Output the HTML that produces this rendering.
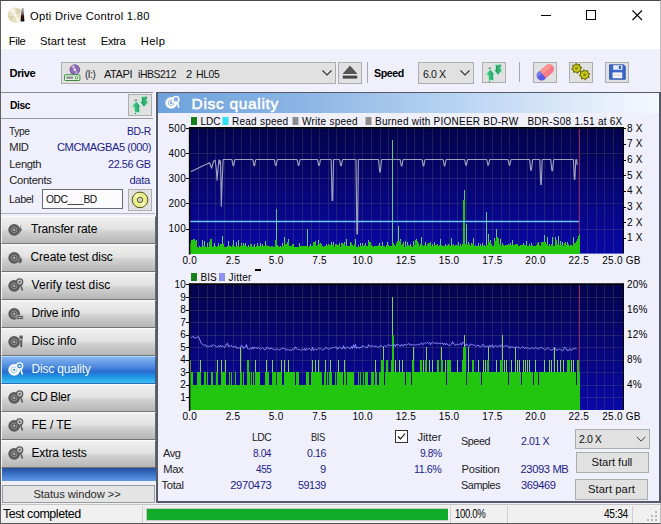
<!DOCTYPE html>
<html><head><meta charset="utf-8"><title>Opti Drive Control 1.80</title><style>
html,body{margin:0;padding:0}
body{width:661px;height:524px;position:relative;overflow:hidden;background:#f0f0fd;font-family:"Liberation Sans",sans-serif;font-size:12px;color:#000;line-height:14px}
div,span{position:absolute;box-sizing:border-box;white-space:nowrap}
svg{position:absolute;overflow:visible}
.b{font-weight:bold}
.nv{color:#1c1c8c}
.btn{background:#e1e1e1;border:1px solid #adadad}
.nav{left:1px;width:155px;height:28px;background:linear-gradient(#f0f0f0 0,#e2e2e2 45%,#d2d2d2 55%,#b6b6b6 100%);border-top:1px solid #fbfbfb;border-left:1px solid #f4f4f4;border-right:1px solid #6a6a70;border-bottom:1px solid #747474}
.nav.sel{background:linear-gradient(#86b6f0 0,#4a86dc 40%,#2a6cd0 56%,#1e96e6 76%,#3cc0f4 100%);border-color:#b4dcff #2c5c9c #2f6cb0 #b4e4ff}
.r{text-align:right}
</style></head><body>
<div style="left:0;top:0;width:661px;height:524px;border:1px solid #6b6b6b;border-top-color:#4a4a4a;border-left:1.6px solid #606060;border-bottom-color:#555;border-right-color:#c0c0c0"></div>
<div style="left:1px;top:1px;width:659px;height:48px;background:#fff"></div>
<svg style="left:0;top:0" width="30" height="30" viewBox="0 0 30 30">
<defs><linearGradient id="ib" x1="0" y1="0" x2="0" y2="1"><stop offset="0" stop-color="#b8b8b8"/><stop offset=".45" stop-color="#6a6066"/><stop offset=".6" stop-color="#2c1016"/><stop offset="1" stop-color="#1a080c"/></linearGradient></defs>
<circle cx="15.2" cy="15" r="7" fill="#e9e2c6" stroke="#cfc7a6" stroke-width=".7"/>
<path d="M15.2 15L9.6 10.4A7.2 7.2 0 0 1 14 7.9Z" fill="#f8f5e8"/>
<path d="M15.2 15L20.6 19.8A7.2 7.2 0 0 1 16.6 22.1Z" fill="#f6f2e2"/>
<path d="M15.2 15L8.2 16.8A7.2 7.2 0 0 0 11 20.9Z" fill="#d9d0ac"/>
<path d="M15.2 15L17 8A7.2 7.2 0 0 1 21.6 11.6Z" fill="#dcd4b4"/>
<circle cx="15.2" cy="15" r="1.5" fill="#fbfaf2"/>
<path d="M21.6 8H23.6L24.4 21.6H20.6Z" fill="url(#ib)"/>
</svg>
<span style="left:30.00px;top:9.00px;font-size:11.2px;letter-spacing:0.254px;">Opti Drive Control 1.80</span>
<svg style="left:0;top:0" width="661" height="30">
<path d="M541 15.5H551" stroke="#000" stroke-width="1"/>
<rect x="586.5" y="10.5" width="9" height="9" fill="none" stroke="#000" stroke-width="1"/>
<path d="M632.5 10.5L642 20M642 10.5L632.5 20" stroke="#000" stroke-width="1.1" fill="none"/>
</svg>
<span style="left:8.75px;top:34.00px;font-size:11.2px;letter-spacing:-0.344px;">File</span>
<span style="left:40.00px;top:34.00px;font-size:11.2px;letter-spacing:0.106px;">Start test</span>
<span style="left:100.75px;top:34.00px;font-size:11.2px;letter-spacing:-0.302px;">Extra</span>
<span style="left:140.75px;top:34.00px;font-size:11.2px;letter-spacing:0.411px;">Help</span>
<span style="left:9.50px;top:66.00px;font-size:11.2px;letter-spacing:-0.450px;font-weight:bold;">Drive</span>
<div class="btn" style="left:61px;top:62px;width:275px;height:22px"></div>
<svg style="left:60px;top:60px" width="24" height="24" viewBox="60 60 24 24">
<circle cx="74.8" cy="69.7" r="4.9" fill="#8f6bb8" stroke="#5e4488" stroke-width=".7"/>
<path d="M74.8 69.7L71.2 66.6A4.8 4.8 0 0 1 74.4 64.9Z" fill="#cdb6e6"/>
<path d="M74.8 69.7L78.4 72.6A4.8 4.8 0 0 1 75.4 74.5Z" fill="#b79ad8"/>
<circle cx="74.8" cy="69.7" r="1.2" fill="#f4eefa"/>
<rect x="64.5" y="74.7" width="15.4" height="5.8" rx="1" fill="#e6efe6" stroke="#3b8a3b" stroke-width="1"/>
<rect x="66.4" y="76.5" width="6.8" height="2.3" fill="#8e8e8e"/>
<circle cx="76.5" cy="77.6" r="1.3" fill="#fff" stroke="#2ca02c" stroke-width=".9"/>
</svg>
<span style="left:84.70px;top:67.00px;font-size:11.2px;letter-spacing:-0.450px;transform:scaleX(0.8771);transform-origin:0 0;color:#222;">(I:)</span>
<span style="left:104.20px;top:67.00px;font-size:11.2px;letter-spacing:-0.450px;transform:scaleX(0.9866);transform-origin:0 0;color:#111;">ATAPI</span>
<span style="left:137.70px;top:67.00px;font-size:11.2px;letter-spacing:-0.450px;transform:scaleX(0.9281);transform-origin:0 0;color:#111;">iHBS212</span>
<span style="left:186.09px;top:67.00px;font-size:11.2px;letter-spacing:0.000px;color:#111;">2</span>
<span style="left:195.50px;top:67.00px;font-size:11.2px;letter-spacing:-0.450px;transform:scaleX(0.9363);transform-origin:0 0;color:#111;">HL05</span>
<svg style="left:321px;top:69px" width="12" height="8"><path d="M1.5 1.5L6 6L10.5 1.5" fill="none" stroke="#333" stroke-width="1.1"/></svg>
<div class="btn" style="left:338px;top:62px;width:24px;height:22px"></div>
<svg style="left:342px;top:63.5px" width="16" height="16"><path d="M8 1.5L15.5 10H0.5Z" fill="#555"/><rect x="0.8" y="11.6" width="14.4" height="3" fill="#444"/></svg>
<div style="left:367px;top:62px;width:1px;height:21px;background:#a8a8a8"></div>
<span style="left:374.00px;top:66.00px;font-size:11.2px;letter-spacing:-0.450px;transform:scaleX(0.9528);transform-origin:0 0;font-weight:bold;">Speed</span>
<div class="btn" style="left:418px;top:62px;width:56px;height:22px"></div>
<span style="left:422.70px;top:67.00px;font-size:11.2px;letter-spacing:-0.450px;transform:scaleX(0.9445);transform-origin:0 0;color:#111;">6.0 X</span>
<svg style="left:459px;top:69px" width="12" height="8"><path d="M1.5 1.5L6 6L10.5 1.5" fill="none" stroke="#333" stroke-width="1.1"/></svg>
<div class="btn" style="left:482px;top:62px;width:24px;height:21px"></div>
<svg style="left:482px;top:62px" width="24" height="21" viewBox="0 0 24 21">
<path d="M8.2 7.4L12.9 12.8H11.2L11.9 18.5H6.9L6 12.8H3.6Z" fill="#3dbb7c" stroke="#a4eecb" stroke-width=".9" stroke-linejoin="round"/>
<path d="M16.1 13L11.9 7.6H13.8L13.2 2.7H18.3L19 7.6H20.6Z" fill="#35b072" stroke="#a4eecb" stroke-width=".9" stroke-linejoin="round"/>
<path d="M8.2 8.6L11 12H9.8L10.4 17.4" stroke="#2a9460" stroke-width="1" fill="none"/>
<path d="M16.1 11.8L13.6 8.6H14.9L14.4 3.8" stroke="#2a9460" stroke-width="1" fill="none"/>
<path d="M6.6 6.2H9M7 19L7.8 20M18 2.6L19 4.6" stroke="#1c5a3a" stroke-width=".9"/>
</svg>
<div style="left:519px;top:62px;width:1px;height:20px;background:#a8a8a8"></div>
<div class="btn" style="left:533px;top:62px;width:24px;height:21px"></div>
<svg style="left:533px;top:62px" width="24" height="21" viewBox="0 0 24 21">
<g transform="rotate(-41 12.4 10.3)"><rect x="2.6" y="5.5" width="19.6" height="9.6" rx="4.4" fill="#f47c88"/>
<rect x="8" y="6" width="13" height="4" rx="2" fill="#fa9a90" opacity=".8"/>
<path d="M7 5.5H9V15.1H7A4.4 4.4 0 0 1 2.6 10.7V9.9A4.4 4.4 0 0 1 7 5.5Z" fill="#5a5ae8"/>
<path d="M7 5.5H9V9H3A4.4 4.4 0 0 1 7 5.5Z" fill="#7c7cf8"/></g>
</svg>
<div class="btn" style="left:569px;top:62px;width:24px;height:21px"></div>
<svg style="left:569px;top:62px" width="24" height="21" viewBox="0 0 24 21">
<g stroke="#6e6e0e" stroke-width="1.1" fill="#cccb18">
<path d="M7.2 1.6L8.6 3.1L10.5 2.4L10.8 4.6L12.6 5.6L11.3 7.2L11.9 9.2L9.8 9.4L8.6 11.1L6.9 9.8L4.8 10.3L4.6 8.2L2.8 7L4.2 5.4L3.7 3.3L5.8 3.2Z"/>
<path d="M15 7.8L16.6 9.2L18.6 8.6L18.8 10.8L20.7 11.9L19.3 13.5L19.9 15.6L17.7 15.8L16.5 17.6L14.7 16.3L12.6 16.8L12.4 14.6L10.5 13.5L11.9 11.8L11.4 9.8L13.6 9.6Z"/>
</g>
<circle cx="7.4" cy="6.3" r="1.4" fill="#85840f"/><circle cx="15.6" cy="12.8" r="1.5" fill="#85840f"/>
</svg>
<div class="btn" style="left:605px;top:62px;width:24px;height:21px"></div>
<svg style="left:605px;top:62px" width="24" height="21" viewBox="0 0 24 21">
<path d="M4.5 2.8H18.6L20.3 4.5V17.3H4.5Z" fill="#3a66cc" stroke="#2c4ea6" stroke-width=".8"/>
<rect x="8.2" y="3.2" width="9.2" height="4.6" fill="#e4ecfb"/><rect x="13.8" y="3.8" width="2.2" height="3.2" fill="#3a66cc"/>
<rect x="7.6" y="10.4" width="9.6" height="5.8" fill="#f4f4f4"/><rect x="7.6" y="12.8" width="9.6" height=".8" fill="#c8c8d8"/>
</svg>
<div style="left:1px;top:118px;width:152px;height:1px;background:#9a9a9a"></div>
<div style="left:1px;top:92px;width:152px;height:1px;background:#8c8c8c"></div>
<span style="left:9.50px;top:98.00px;font-size:11.2px;letter-spacing:-0.450px;transform:scaleX(0.9200);transform-origin:0 0;font-weight:bold;">Disc</span>
<div class="btn" style="left:128px;top:94px;width:24px;height:22px"></div>
<svg style="left:128px;top:94px" width="24" height="21" viewBox="0 0 24 21">
<path d="M8.2 7.4L12.9 12.8H11.2L11.9 18.5H6.9L6 12.8H3.6Z" fill="#3dbb7c" stroke="#a4eecb" stroke-width=".9" stroke-linejoin="round"/>
<path d="M16.1 13L11.9 7.6H13.8L13.2 2.7H18.3L19 7.6H20.6Z" fill="#35b072" stroke="#a4eecb" stroke-width=".9" stroke-linejoin="round"/>
<path d="M8.2 8.6L11 12H9.8L10.4 17.4" stroke="#2a9460" stroke-width="1" fill="none"/>
<path d="M16.1 11.8L13.6 8.6H14.9L14.4 3.8" stroke="#2a9460" stroke-width="1" fill="none"/>
<path d="M6.6 6.2H9M7 19L7.8 20M18 2.6L19 4.6" stroke="#1c5a3a" stroke-width=".9"/>
</svg>
<span style="left:9.20px;top:124.00px;font-size:11.2px;letter-spacing:-0.450px;transform:scaleX(0.9192);transform-origin:0 0;color:#222;">Type</span>
<span style="left:126.60px;top:124.00px;font-size:11.2px;letter-spacing:-0.450px;transform:scaleX(0.9296);transform-origin:0 0;color:#1c1c8c;">BD-R</span>
<span style="left:9.20px;top:140.00px;font-size:11.2px;letter-spacing:-0.376px;color:#222;">MID</span>
<span style="left:57.40px;top:140.00px;font-size:11.2px;letter-spacing:-0.450px;transform:scaleX(0.9940);transform-origin:0 0;color:#1c1c8c;">CMCMAGBA5 (000)</span>
<span style="left:9.20px;top:157.00px;font-size:11.2px;letter-spacing:-0.374px;color:#222;">Length</span>
<span style="left:108.20px;top:157.00px;font-size:11.2px;letter-spacing:-0.450px;transform:scaleX(0.9758);transform-origin:0 0;color:#1c1c8c;">22.56 GB</span>
<span style="left:9.20px;top:173.00px;font-size:11.2px;letter-spacing:-0.294px;color:#222;">Contents</span>
<span style="left:129.50px;top:173.00px;font-size:11.2px;letter-spacing:-0.347px;color:#1c1c8c;">data</span>
<span style="left:9.20px;top:192.00px;font-size:11.2px;letter-spacing:-0.450px;transform:scaleX(0.9654);transform-origin:0 0;color:#222;">Label</span>
<div style="left:1px;top:213px;width:154px;height:1px;background:#b4b4bc"></div>
<div style="left:154.5px;top:93px;width:1px;height:121px;background:#f8f8ff"></div>
<div style="left:42px;top:189px;width:81px;height:20px;background:#fcfcff;border:1px solid #6a6a6a"></div>
<span style="left:46.00px;top:192.00px;font-size:11.2px;letter-spacing:-0.450px;transform:scaleX(0.9163);transform-origin:0 0;color:#111;">ODC___BD</span>
<div class="btn" style="left:128px;top:189px;width:24px;height:21.5px"></div>
<svg style="left:128px;top:189px" width="24" height="22" viewBox="128 189 24 22">
<circle cx="140" cy="199.9" r="7.8" fill="#e9ee8c" stroke="#50501e" stroke-width="1"/>
<path d="M140 199.9L134.6 195.4A7 7 0 0 1 138.6 193Z M140 199.9L145.6 204.2A7 7 0 0 1 141.6 206.8Z" fill="#f6f9b8"/>
<circle cx="140" cy="199.9" r="2.7" fill="#d2d2c0" stroke="#50501e" stroke-width=".9"/>
</svg>
<div class="nav" style="top:215.5px"><svg style="left:.3px;top:-.5px" width="30" height="28" viewBox="0 0 30 28">
<circle cx="12.2" cy="13.8" r="5.9" fill="#5c5c5c"/>
<circle cx="12.2" cy="13.8" r="2.9" fill="none" stroke="#c4c4c4" stroke-width=".8" opacity=".6"/>
<circle cx="12.2" cy="13.8" r="1.15" fill="#c4c4c4"/>
<path d="M19.6 8.5L16.4 14.2H18.4L16.6 19L20.4 12.8H18.4Z" fill="#5c5c5c"/>
</svg></div>
<span style="left:31.00px;top:222.00px;font-size:12px;letter-spacing:-0.160px;color:#000;">Transfer rate</span>
<div class="nav" style="top:243.5px"><svg style="left:.3px;top:-.5px" width="30" height="28" viewBox="0 0 30 28">
<circle cx="12.2" cy="13.8" r="5.9" fill="#5c5c5c"/>
<circle cx="12.2" cy="13.8" r="2.9" fill="none" stroke="#c4c4c4" stroke-width=".8" opacity=".6"/>
<circle cx="12.2" cy="13.8" r="1.15" fill="#c4c4c4"/>
<path d="M18.2 12.5C20.4 14.5 20.6 17 19.6 18.4C18.6 19.6 16.6 19.6 15.8 18.2C15 16.6 17.6 15 18.2 12.5Z" fill="#5c5c5c" stroke="#c4c4c4" stroke-width=".6"/>
</svg></div>
<span style="left:30.50px;top:250.00px;font-size:12px;letter-spacing:-0.069px;color:#000;">Create test disc</span>
<div class="nav" style="top:271.5px"><svg style="left:.3px;top:-.5px" width="30" height="28" viewBox="0 0 30 28">
<circle cx="12.2" cy="13.8" r="5.9" fill="#5c5c5c"/>
<circle cx="12.2" cy="13.8" r="2.9" fill="none" stroke="#c4c4c4" stroke-width=".8" opacity=".6"/>
<circle cx="12.2" cy="13.8" r="1.15" fill="#c4c4c4"/>
<circle cx="17.6" cy="10" r="3.1" fill="#c4c4c4" stroke="#5c5c5c" stroke-width="1.3"/><circle cx="17.6" cy="10" r="1.1" fill="#5c5c5c"/><path d="M18.8 13L20.4 18.6" stroke="#5c5c5c" stroke-width="1.6"/>
</svg></div>
<span style="left:31.50px;top:278.00px;font-size:12px;letter-spacing:0.091px;color:#000;">Verify test disc</span>
<div class="nav" style="top:299.5px"><svg style="left:.3px;top:-.5px" width="30" height="28" viewBox="0 0 30 28">
<circle cx="12.2" cy="13.8" r="5.9" fill="#5c5c5c"/>
<circle cx="12.2" cy="13.8" r="2.9" fill="none" stroke="#c4c4c4" stroke-width=".8" opacity=".6"/>
<circle cx="12.2" cy="13.8" r="1.15" fill="#c4c4c4"/>
<rect x="14.2" y="15.6" width="7" height="4" rx=".6" fill="#5c5c5c" stroke="#c4c4c4" stroke-width=".8"/><path d="M15.6 17.6H19.8" stroke="#c4c4c4" stroke-width=".8"/>
</svg></div>
<span style="left:31.50px;top:306.00px;font-size:12px;letter-spacing:-0.256px;color:#000;">Drive info</span>
<div class="nav" style="top:327.5px"><svg style="left:.3px;top:-.5px" width="30" height="28" viewBox="0 0 30 28">
<circle cx="12.2" cy="13.8" r="5.9" fill="#5c5c5c"/>
<circle cx="12.2" cy="13.8" r="2.9" fill="none" stroke="#c4c4c4" stroke-width=".8" opacity=".6"/>
<circle cx="12.2" cy="13.8" r="1.15" fill="#c4c4c4"/>
<rect x="17.4" y="7.6" width="3.4" height="3.2" fill="#5c5c5c"/><rect x="18" y="11.4" width="2.4" height="7.8" fill="#5c5c5c" stroke="#c4c4c4" stroke-width=".5"/>
</svg></div>
<span style="left:31.50px;top:334.00px;font-size:12px;letter-spacing:-0.140px;color:#000;">Disc info</span>
<div class="nav sel" style="top:355.5px"><svg style="left:.3px;top:-.5px" width="30" height="28" viewBox="0 0 30 28">
<circle cx="12.2" cy="13.8" r="5.9" fill="#fff"/>
<circle cx="12.2" cy="13.8" r="2.9" fill="none" stroke="#3a8ae0" stroke-width=".8" opacity=".6"/>
<circle cx="12.2" cy="13.8" r="1.15" fill="#3a8ae0"/>
<circle cx="17.6" cy="10" r="3.1" fill="#3a8ae0" stroke="#fff" stroke-width="1.3"/><circle cx="17.6" cy="10" r="1.1" fill="#fff"/><path d="M18.8 13L20.4 18.6" stroke="#fff" stroke-width="1.6"/>
</svg></div>
<span style="left:31.50px;top:362.00px;font-size:12px;letter-spacing:-0.189px;color:#f0fbff;">Disc quality</span>
<div class="nav" style="top:383.5px"><svg style="left:.3px;top:-.5px" width="30" height="28" viewBox="0 0 30 28">
<circle cx="12.2" cy="13.8" r="5.9" fill="#5c5c5c"/>
<circle cx="12.2" cy="13.8" r="2.9" fill="none" stroke="#c4c4c4" stroke-width=".8" opacity=".6"/>
<circle cx="12.2" cy="13.8" r="1.15" fill="#c4c4c4"/>
<circle cx="17.6" cy="10" r="3.1" fill="#c4c4c4" stroke="#5c5c5c" stroke-width="1.3"/><circle cx="17.6" cy="10" r="1.1" fill="#5c5c5c"/><path d="M18.8 13L20.4 18.6" stroke="#5c5c5c" stroke-width="1.6"/>
</svg></div>
<span style="left:30.60px;top:390.00px;font-size:12px;letter-spacing:-0.317px;color:#000;">CD Bler</span>
<div class="nav" style="top:411.5px"><svg style="left:.3px;top:-.5px" width="30" height="28" viewBox="0 0 30 28">
<circle cx="12.2" cy="13.8" r="5.9" fill="#5c5c5c"/>
<circle cx="12.2" cy="13.8" r="2.9" fill="none" stroke="#c4c4c4" stroke-width=".8" opacity=".6"/>
<circle cx="12.2" cy="13.8" r="1.15" fill="#c4c4c4"/>
<circle cx="17.6" cy="10" r="3.1" fill="#c4c4c4" stroke="#5c5c5c" stroke-width="1.3"/><circle cx="17.6" cy="10" r="1.1" fill="#5c5c5c"/><path d="M18.8 13L20.4 18.6" stroke="#5c5c5c" stroke-width="1.6"/>
</svg></div>
<span style="left:31.40px;top:418.00px;font-size:12px;letter-spacing:-0.040px;color:#000;">FE / TE</span>
<div class="nav" style="top:439.5px"><svg style="left:.3px;top:-.5px" width="30" height="28" viewBox="0 0 30 28">
<circle cx="12.2" cy="13.8" r="5.9" fill="#5c5c5c"/>
<circle cx="12.2" cy="13.8" r="2.9" fill="none" stroke="#c4c4c4" stroke-width=".8" opacity=".6"/>
<circle cx="12.2" cy="13.8" r="1.15" fill="#c4c4c4"/>
<circle cx="17.6" cy="10" r="3.1" fill="#c4c4c4" stroke="#5c5c5c" stroke-width="1.3"/><circle cx="17.6" cy="10" r="1.1" fill="#5c5c5c"/><path d="M18.8 13L20.4 18.6" stroke="#5c5c5c" stroke-width="1.6"/>
</svg></div>
<span style="left:31.50px;top:446.00px;font-size:12px;letter-spacing:-0.150px;color:#000;">Extra tests</span>
<div style="left:2px;top:468px;width:154px;height:13px;background:linear-gradient(#244e9e,#3f78cc 55%,#5e98e2)"></div>
<div class="btn" style="left:2px;top:484.5px;width:153px;height:18px;border-color:#9a9a9a;background:#e4e4e4"></div>
<span style="left:33.40px;top:487.00px;font-size:11.2px;letter-spacing:-0.055px;color:#2a2a2a;">Status window &gt;&gt;</span>
<div style="left:1px;top:504px;width:659px;height:19px;background:#f0f0f0;border-top:1px solid #c4c4c4"></div>
<span style="left:3.00px;top:507.00px;font-size:12.5px;letter-spacing:-0.450px;transform:scaleX(0.9986);transform-origin:0 0;">Test completed</span>
<div style="left:146px;top:508px;width:302px;height:13px;background:#e6e6e6;border:1px solid #c8c8c8"></div>
<div style="left:147px;top:509px;width:300.5px;height:11px;background:#10ac2a"></div>
<span style="left:455.30px;top:507.00px;font-size:12.5px;letter-spacing:-0.450px;transform:scaleX(0.7651);transform-origin:0 0;">100.0%</span>
<span style="left:604.20px;top:507.00px;font-size:12.5px;letter-spacing:-0.450px;transform:scaleX(0.8200);transform-origin:0 0;">45:34</span>
<div style="left:142px;top:506px;width:1px;height:17px;background:#d0d0d0"></div>
<div style="left:450px;top:506px;width:1px;height:17px;background:#d0d0d0"></div>
<div style="left:507px;top:506px;width:1px;height:17px;background:#d0d0d0"></div>
<div style="left:632px;top:506px;width:1px;height:17px;background:#d0d0d0"></div>
<svg style="left:646px;top:510px" width="13" height="13"><g fill="#b8b8b8"><rect x="9" y="1" width="2" height="2"/><rect x="5" y="5" width="2" height="2"/><rect x="9" y="5" width="2" height="2"/><rect x="1" y="9" width="2" height="2"/><rect x="5" y="9" width="2" height="2"/><rect x="9" y="9" width="2" height="2"/></g></svg>
<div style="left:156px;top:92px;width:505px;height:411px;background:#f0f0fd;border:2px solid #565a68;border-top-width:1px"></div>
<div style="left:158px;top:93px;width:501px;height:20px;background:linear-gradient(90deg,#6ea2dc 0,#8ab4e4 28%,#bcd6f3 62%,#f6f9ff 100%)"></div>
<svg style="left:160px;top:93px" width="24" height="20" viewBox="0 0 24 20">
<circle cx="11.2" cy="9.8" r="5.9" fill="#fff"/>
<circle cx="11.2" cy="9.8" r="2.8" fill="none" stroke="#7aa8dc" stroke-width=".8"/>
<circle cx="11.2" cy="9.8" r="1.2" fill="#6c9cd4"/>
<circle cx="16" cy="6.4" r="3" fill="#8ab4e6" stroke="#fff" stroke-width="1.4"/>
<path d="M17.4 9L18.8 14.8" stroke="#fff" stroke-width="1.7"/>
</svg>
<span style="left:191.60px;top:96.50px;font-size:15.5px;letter-spacing:0.674px;color:#fff;-webkit-text-stroke:.55px #fff;">Disc quality</span>
<svg style="left:0;top:0" width="661" height="524" font-family="Liberation Sans, sans-serif" font-size="10" letter-spacing=".25">
<defs><linearGradient id="bg" x1="0" y1="0" x2="0" y2="1"><stop offset="0" stop-color="#03034c"/><stop offset="1" stop-color="#0808a6"/></linearGradient></defs>
<rect x="190.0" y="128.2" width="433.0" height="125.4" fill="url(#bg)"/>
<path d="M198.5 128.2V253.6M207.5 128.2V253.6M215.5 128.2V253.6M224.5 128.2V253.6M233.5 128.2V253.6M241.5 128.2V253.6M250.5 128.2V253.6M259.5 128.2V253.6M267.5 128.2V253.6M276.5 128.2V253.6M285.5 128.2V253.6M293.5 128.2V253.6M302.5 128.2V253.6M311.5 128.2V253.6M319.5 128.2V253.6M328.5 128.2V253.6M336.5 128.2V253.6M345.5 128.2V253.6M354.5 128.2V253.6M362.5 128.2V253.6M371.5 128.2V253.6M380.5 128.2V253.6M388.5 128.2V253.6M397.5 128.2V253.6M406.5 128.2V253.6M414.5 128.2V253.6M423.5 128.2V253.6M432.5 128.2V253.6M440.5 128.2V253.6M449.5 128.2V253.6M457.5 128.2V253.6M466.5 128.2V253.6M475.5 128.2V253.6M483.5 128.2V253.6M492.5 128.2V253.6M501.5 128.2V253.6M509.5 128.2V253.6M518.5 128.2V253.6M527.5 128.2V253.6M535.5 128.2V253.6M544.5 128.2V253.6M553.5 128.2V253.6M561.5 128.2V253.6M570.5 128.2V253.6M579.5 128.2V253.6M587.5 128.2V253.6M596.5 128.2V253.6M604.5 128.2V253.6M613.5 128.2V253.6M190.0 153.5H623.0M190.0 178.5H623.0M190.0 203.5H623.0M190.0 229.5H623.0" stroke="#9a8e66" stroke-width="1" fill="none" opacity=".2"/>
<path d="M579.4 128.2V253.6" stroke="#8c2c68" stroke-width="1.2"/>
<path d="M190 253.6V242.7h1V253.6ZM191 253.6V239.7h1V253.6ZM192 253.6V239.7h1V253.6ZM193 253.6V239.2h1V253.6ZM194 253.6V239.2h1V253.6ZM195 253.6V240.6h1V253.6ZM196 253.6V240.6h1V253.6ZM197 253.6V246.9h1V253.6ZM198 253.6V247.5h1V253.6ZM199 253.6V247.0h1V253.6ZM200 253.6V247.0h1V253.6ZM201 253.6V247.2h1V253.6ZM202 253.6V245.7h1V253.6ZM203 253.6V245.7h1V253.6ZM204 253.6V245.7h1V253.6ZM205 253.6V246.5h1V253.6ZM206 253.6V247.0h1V253.6ZM207 253.6V246.6h1V253.6ZM208 253.6V246.6h1V253.6ZM209 253.6V242.0h1V253.6ZM210 253.6V239.2h1V253.6ZM211 253.6V239.2h1V253.6ZM212 253.6V247.4h1V253.6ZM213 253.6V246.1h1V253.6ZM214 253.6V246.1h1V253.6ZM215 253.6V246.4h1V253.6ZM216 253.6V246.7h1V253.6ZM217 253.6V245.8h1V253.6ZM218 253.6V245.8h1V253.6ZM219 253.6V246.3h1V253.6ZM220 253.6V243.8h1V253.6ZM221 253.6V243.8h1V253.6ZM222 253.6V243.8h1V253.6ZM223 253.6V244.3h1V253.6ZM224 253.6V246.8h1V253.6ZM225 253.6V247.3h1V253.6ZM226 253.6V246.5h1V253.6ZM227 253.6V246.0h1V253.6ZM228 253.6V245.9h1V253.6ZM229 253.6V245.9h1V253.6ZM230 253.6V245.9h1V253.6ZM231 253.6V247.0h1V253.6ZM232 253.6V245.4h1V253.6ZM233 253.6V245.4h1V253.6ZM234 253.6V245.7h1V253.6ZM235 253.6V246.5h1V253.6ZM236 253.6V246.0h1V253.6ZM237 253.6V246.0h1V253.6ZM238 253.6V246.0h1V253.6ZM239 253.6V247.2h1V253.6ZM240 253.6V245.6h1V253.6ZM241 253.6V245.6h1V253.6ZM242 253.6V246.0h1V253.6ZM243 253.6V244.5h1V253.6ZM244 253.6V244.5h1V253.6ZM245 253.6V244.5h1V253.6ZM246 253.6V245.9h1V253.6ZM247 253.6V246.5h1V253.6ZM248 253.6V246.5h1V253.6ZM249 253.6V246.9h1V253.6ZM250 253.6V243.6h1V253.6ZM251 253.6V243.6h1V253.6ZM252 253.6V247.3h1V253.6ZM253 253.6V245.6h1V253.6ZM254 253.6V245.6h1V253.6ZM255 253.6V247.0h1V253.6ZM256 253.6V246.4h1V253.6ZM257 253.6V245.6h1V253.6ZM258 253.6V245.6h1V253.6ZM259 253.6V245.9h1V253.6ZM260 253.6V245.6h1V253.6ZM261 253.6V245.6h1V253.6ZM262 253.6V245.6h1V253.6ZM263 253.6V245.6h1V253.6ZM264 253.6V245.6h1V253.6ZM265 253.6V245.2h1V253.6ZM266 253.6V245.2h1V253.6ZM267 253.6V246.2h1V253.6ZM268 253.6V246.1h1V253.6ZM269 253.6V246.1h1V253.6ZM270 253.6V247.1h1V253.6ZM271 253.6V245.9h1V253.6ZM272 253.6V245.9h1V253.6ZM273 253.6V246.9h1V253.6ZM274 253.6V246.7h1V253.6ZM275 253.6V239.6h1V253.6ZM276 253.6V239.6h1V253.6ZM277 253.6V245.4h1V253.6ZM278 253.6V245.6h1V253.6ZM279 253.6V247.0h1V253.6ZM280 253.6V246.6h1V253.6ZM281 253.6V246.6h1V253.6ZM282 253.6V246.1h1V253.6ZM283 253.6V246.1h1V253.6ZM284 253.6V243.9h1V253.6ZM285 253.6V243.9h1V253.6ZM286 253.6V243.8h1V253.6ZM287 253.6V242.4h1V253.6ZM288 253.6V242.4h1V253.6ZM289 253.6V246.2h1V253.6ZM290 253.6V246.4h1V253.6ZM291 253.6V246.3h1V253.6ZM292 253.6V243.8h1V253.6ZM293 253.6V243.8h1V253.6ZM294 253.6V246.9h1V253.6ZM295 253.6V246.6h1V253.6ZM296 253.6V246.6h1V253.6ZM297 253.6V246.6h1V253.6ZM298 253.6V247.0h1V253.6ZM299 253.6V246.3h1V253.6ZM300 253.6V246.3h1V253.6ZM301 253.6V246.3h1V253.6ZM302 253.6V246.4h1V253.6ZM303 253.6V246.2h1V253.6ZM304 253.6V246.2h1V253.6ZM305 253.6V246.2h1V253.6ZM306 253.6V245.5h1V253.6ZM307 253.6V245.5h1V253.6ZM308 253.6V246.7h1V253.6ZM309 253.6V245.5h1V253.6ZM310 253.6V245.5h1V253.6ZM311 253.6V245.7h1V253.6ZM312 253.6V245.9h1V253.6ZM313 253.6V242.2h1V253.6ZM314 253.6V242.1h1V253.6ZM315 253.6V242.1h1V253.6ZM316 253.6V246.4h1V253.6ZM317 253.6V245.3h1V253.6ZM318 253.6V244.4h1V253.6ZM319 253.6V244.4h1V253.6ZM320 253.6V244.2h1V253.6ZM321 253.6V244.2h1V253.6ZM322 253.6V246.0h1V253.6ZM323 253.6V246.9h1V253.6ZM324 253.6V245.7h1V253.6ZM325 253.6V245.7h1V253.6ZM326 253.6V245.7h1V253.6ZM327 253.6V246.3h1V253.6ZM328 253.6V245.4h1V253.6ZM329 253.6V245.4h1V253.6ZM330 253.6V244.6h1V253.6ZM331 253.6V244.6h1V253.6ZM332 253.6V245.4h1V253.6ZM333 253.6V245.4h1V253.6ZM334 253.6V246.9h1V253.6ZM335 253.6V244.0h1V253.6ZM336 253.6V244.0h1V253.6ZM337 253.6V244.7h1V253.6ZM338 253.6V245.1h1V253.6ZM339 253.6V245.1h1V253.6ZM340 253.6V246.5h1V253.6ZM341 253.6V243.1h1V253.6ZM342 253.6V243.1h1V253.6ZM343 253.6V243.5h1V253.6ZM344 253.6V243.5h1V253.6ZM345 253.6V246.2h1V253.6ZM346 253.6V245.8h1V253.6ZM347 253.6V245.8h1V253.6ZM348 253.6V246.4h1V253.6ZM349 253.6V245.7h1V253.6ZM350 253.6V243.3h1V253.6ZM351 253.6V243.3h1V253.6ZM352 253.6V245.2h1V253.6ZM353 253.6V245.5h1V253.6ZM354 253.6V244.0h1V253.6ZM355 253.6V244.0h1V253.6ZM356 253.6V246.6h1V253.6ZM357 253.6V246.5h1V253.6ZM358 253.6V246.5h1V253.6ZM359 253.6V246.5h1V253.6ZM360 253.6V246.2h1V253.6ZM361 253.6V246.2h1V253.6ZM362 253.6V245.6h1V253.6ZM363 253.6V245.6h1V253.6ZM364 253.6V245.1h1V253.6ZM365 253.6V245.1h1V253.6ZM366 253.6V246.0h1V253.6ZM367 253.6V245.7h1V253.6ZM368 253.6V241.8h1V253.6ZM369 253.6V241.8h1V253.6ZM370 253.6V242.0h1V253.6ZM371 253.6V245.3h1V253.6ZM372 253.6V245.6h1V253.6ZM373 253.6V246.6h1V253.6ZM374 253.6V246.0h1V253.6ZM375 253.6V245.8h1V253.6ZM376 253.6V245.8h1V253.6ZM377 253.6V245.6h1V253.6ZM378 253.6V245.0h1V253.6ZM379 253.6V245.0h1V253.6ZM380 253.6V245.8h1V253.6ZM381 253.6V245.7h1V253.6ZM382 253.6V245.5h1V253.6ZM383 253.6V245.5h1V253.6ZM384 253.6V245.9h1V253.6ZM385 253.6V246.7h1V253.6ZM386 253.6V244.5h1V253.6ZM387 253.6V244.5h1V253.6ZM388 253.6V245.1h1V253.6ZM389 253.6V246.1h1V253.6ZM390 253.6V245.7h1V253.6ZM391 253.6V245.7h1V253.6ZM392 253.6V242.6h1V253.6ZM393 253.6V242.6h1V253.6ZM394 253.6V244.9h1V253.6ZM395 253.6V245.6h1V253.6ZM396 253.6V242.9h1V253.6ZM397 253.6V241.1h1V253.6ZM398 253.6V241.1h1V253.6ZM399 253.6V241.1h1V253.6ZM400 253.6V241.1h1V253.6ZM401 253.6V245.3h1V253.6ZM402 253.6V244.3h1V253.6ZM403 253.6V244.3h1V253.6ZM404 253.6V246.5h1V253.6ZM405 253.6V245.8h1V253.6ZM406 253.6V245.8h1V253.6ZM407 253.6V244.9h1V253.6ZM408 253.6V244.9h1V253.6ZM409 253.6V245.9h1V253.6ZM410 253.6V245.9h1V253.6ZM411 253.6V246.2h1V253.6ZM412 253.6V246.7h1V253.6ZM413 253.6V245.4h1V253.6ZM414 253.6V245.4h1V253.6ZM415 253.6V240.3h1V253.6ZM416 253.6V240.3h1V253.6ZM417 253.6V240.9h1V253.6ZM418 253.6V242.9h1V253.6ZM419 253.6V246.2h1V253.6ZM420 253.6V243.6h1V253.6ZM421 253.6V243.6h1V253.6ZM422 253.6V245.1h1V253.6ZM423 253.6V245.6h1V253.6ZM424 253.6V245.0h1V253.6ZM425 253.6V245.0h1V253.6ZM426 253.6V245.9h1V253.6ZM427 253.6V244.4h1V253.6ZM428 253.6V242.6h1V253.6ZM429 253.6V242.6h1V253.6ZM430 253.6V242.6h1V253.6ZM431 253.6V246.1h1V253.6ZM432 253.6V246.1h1V253.6ZM433 253.6V246.3h1V253.6ZM434 253.6V244.9h1V253.6ZM435 253.6V244.9h1V253.6ZM436 253.6V245.1h1V253.6ZM437 253.6V245.1h1V253.6ZM438 253.6V246.1h1V253.6ZM439 253.6V245.0h1V253.6ZM440 253.6V244.7h1V253.6ZM441 253.6V244.7h1V253.6ZM442 253.6V246.1h1V253.6ZM443 253.6V246.4h1V253.6ZM444 253.6V245.5h1V253.6ZM445 253.6V245.5h1V253.6ZM446 253.6V245.9h1V253.6ZM447 253.6V244.9h1V253.6ZM448 253.6V244.9h1V253.6ZM449 253.6V245.3h1V253.6ZM450 253.6V245.7h1V253.6ZM451 253.6V245.1h1V253.6ZM452 253.6V245.1h1V253.6ZM453 253.6V245.1h1V253.6ZM454 253.6V246.3h1V253.6ZM455 253.6V245.3h1V253.6ZM456 253.6V245.3h1V253.6ZM457 253.6V245.2h1V253.6ZM458 253.6V245.2h1V253.6ZM459 253.6V246.1h1V253.6ZM460 253.6V246.1h1V253.6ZM461 253.6V246.1h1V253.6ZM462 253.6V244.0h1V253.6ZM463 253.6V199.7h1V253.6ZM464 253.6V199.7h1V253.6ZM465 253.6V244.0h1V253.6ZM466 253.6V244.0h1V253.6ZM467 253.6V244.9h1V253.6ZM468 253.6V244.2h1V253.6ZM469 253.6V244.2h1V253.6ZM470 253.6V245.6h1V253.6ZM471 253.6V243.7h1V253.6ZM472 253.6V243.7h1V253.6ZM473 253.6V243.7h1V253.6ZM474 253.6V246.1h1V253.6ZM475 253.6V246.1h1V253.6ZM476 253.6V246.1h1V253.6ZM477 253.6V245.9h1V253.6ZM478 253.6V245.9h1V253.6ZM479 253.6V245.9h1V253.6ZM480 253.6V245.7h1V253.6ZM481 253.6V245.7h1V253.6ZM482 253.6V245.7h1V253.6ZM483 253.6V246.0h1V253.6ZM484 253.6V245.7h1V253.6ZM485 253.6V245.7h1V253.6ZM486 253.6V244.7h1V253.6ZM487 253.6V244.7h1V253.6ZM488 253.6V241.9h1V253.6ZM489 253.6V241.9h1V253.6ZM490 253.6V241.9h1V253.6ZM491 253.6V244.2h1V253.6ZM492 253.6V245.8h1V253.6ZM493 253.6V246.2h1V253.6ZM494 253.6V241.1h1V253.6ZM495 253.6V241.1h1V253.6ZM496 253.6V237.1h1V253.6ZM497 253.6V237.1h1V253.6ZM498 253.6V237.9h1V253.6ZM499 253.6V243.9h1V253.6ZM500 253.6V243.9h1V253.6ZM501 253.6V245.9h1V253.6ZM502 253.6V244.7h1V253.6ZM503 253.6V244.7h1V253.6ZM504 253.6V245.9h1V253.6ZM505 253.6V245.0h1V253.6ZM506 253.6V245.0h1V253.6ZM507 253.6V245.2h1V253.6ZM508 253.6V244.6h1V253.6ZM509 253.6V244.6h1V253.6ZM510 253.6V244.6h1V253.6ZM511 253.6V245.4h1V253.6ZM512 253.6V245.0h1V253.6ZM513 253.6V245.0h1V253.6ZM514 253.6V244.9h1V253.6ZM515 253.6V243.5h1V253.6ZM516 253.6V243.5h1V253.6ZM517 253.6V243.8h1V253.6ZM518 253.6V246.2h1V253.6ZM519 253.6V245.7h1V253.6ZM520 253.6V244.7h1V253.6ZM521 253.6V244.7h1V253.6ZM522 253.6V245.4h1V253.6ZM523 253.6V245.2h1V253.6ZM524 253.6V245.2h1V253.6ZM525 253.6V244.9h1V253.6ZM526 253.6V244.9h1V253.6ZM527 253.6V245.7h1V253.6ZM528 253.6V245.6h1V253.6ZM529 253.6V245.6h1V253.6ZM530 253.6V246.0h1V253.6ZM531 253.6V244.5h1V253.6ZM532 253.6V244.5h1V253.6ZM533 253.6V245.8h1V253.6ZM534 253.6V245.8h1V253.6ZM535 253.6V246.0h1V253.6ZM536 253.6V244.8h1V253.6ZM537 253.6V242.6h1V253.6ZM538 253.6V242.6h1V253.6ZM539 253.6V245.2h1V253.6ZM540 253.6V245.5h1V253.6ZM541 253.6V241.9h1V253.6ZM542 253.6V241.6h1V253.6ZM543 253.6V241.5h1V253.6ZM544 253.6V241.5h1V253.6ZM545 253.6V241.5h1V253.6ZM546 253.6V243.7h1V253.6ZM547 253.6V243.7h1V253.6ZM548 253.6V245.8h1V253.6ZM549 253.6V245.5h1V253.6ZM550 253.6V245.5h1V253.6ZM551 253.6V243.5h1V253.6ZM552 253.6V243.5h1V253.6ZM553 253.6V245.6h1V253.6ZM554 253.6V245.6h1V253.6ZM555 253.6V239.7h1V253.6ZM556 253.6V239.7h1V253.6ZM557 253.6V243.8h1V253.6ZM558 253.6V243.8h1V253.6ZM559 253.6V245.4h1V253.6ZM560 253.6V245.1h1V253.6ZM561 253.6V245.1h1V253.6ZM562 253.6V245.1h1V253.6ZM563 253.6V245.5h1V253.6ZM564 253.6V243.1h1V253.6ZM565 253.6V243.1h1V253.6ZM566 253.6V244.7h1V253.6ZM567 253.6V244.4h1V253.6ZM568 253.6V244.4h1V253.6ZM569 253.6V246.0h1V253.6ZM570 253.6V245.4h1V253.6ZM571 253.6V245.4h1V253.6ZM572 253.6V245.8h1V253.6ZM573 253.6V242.9h1V253.6ZM574 253.6V242.9h1V253.6ZM575 253.6V243.1h1V253.6ZM576 253.6V240.8h1V253.6ZM577 253.6V238.6h1V253.6ZM578 253.6V236.3h1V253.6ZM579 253.6V234.0h1V253.6Z" fill="#22c60e" shape-rendering="crispEdges"/>
<path d="M196 240.6V239.5h1V240.6ZM199 247.0V245.6h1V247.0ZM202 245.7V239.6h1V245.7ZM204 245.7V240.9h1V245.7ZM207 246.6V243.4h1V246.6ZM214 246.1V242.7h1V246.1ZM218 245.8V243.0h1V245.8ZM222 243.8V235.5h1V243.8ZM228 245.9V241.3h1V245.9ZM233 245.4V239.8h1V245.4ZM236 246.0V242.3h1V246.0ZM238 246.0V240.1h1V246.0ZM241 245.6V243.3h1V245.6ZM243 244.5V242.9h1V244.5ZM245 244.5V242.5h1V244.5ZM248 246.5V245.1h1V246.5ZM254 245.6V243.9h1V245.6ZM257 245.6V243.1h1V245.6ZM260 245.6V243.3h1V245.6ZM262 245.6V243.5h1V245.6ZM265 245.2V240.8h1V245.2ZM276 239.6V209.0h1V239.6ZM280 246.6V245.5h1V246.6ZM282 246.1V242.8h1V246.1ZM284 243.9V236.8h1V243.9ZM288 242.4V239.3h1V242.4ZM299 246.3V243.2h1V246.3ZM307 245.5V228.5h1V245.5ZM310 245.5V244.4h1V245.5ZM315 242.1V241.3h1V242.1ZM318 244.4V240.2h1V244.4ZM320 244.2V243.0h1V244.2ZM326 245.7V244.3h1V245.7ZM328 245.4V244.1h1V245.4ZM331 244.6V241.9h1V244.6ZM333 245.4V241.8h1V245.4ZM339 245.1V243.0h1V245.1ZM344 243.5V241.7h1V243.5ZM346 245.8V238.9h1V245.8ZM350 243.3V242.4h1V243.3ZM355 244.0V238.6h1V244.0ZM358 246.5V245.2h1V246.5ZM360 246.2V242.8h1V246.2ZM362 245.6V243.4h1V245.6ZM365 245.1V243.4h1V245.1ZM368 241.8V239.9h1V241.8ZM379 245.0V242.5h1V245.0ZM382 245.5V242.4h1V245.5ZM387 244.5V242.1h1V244.5ZM392 242.6V139.5h1V242.6ZM398 241.1V225.5h1V241.1ZM400 241.1V238.6h1V241.1ZM403 244.3V242.2h1V244.3ZM405 245.8V241.4h1V245.8ZM407 244.9V241.6h1V244.9ZM410 245.9V244.1h1V245.9ZM413 245.4V241.2h1V245.4ZM416 240.3V239.1h1V240.3ZM421 243.6V237.1h1V243.6ZM425 245.0V242.0h1V245.0ZM430 242.6V241.8h1V242.6ZM432 246.1V244.4h1V246.1ZM434 244.9V241.8h1V244.9ZM437 245.1V244.2h1V245.1ZM440 244.7V239.2h1V244.7ZM445 245.5V244.4h1V245.5ZM448 244.9V243.9h1V244.9ZM451 245.1V237.5h1V245.1ZM453 245.1V243.5h1V245.1ZM458 245.2V242.0h1V245.2ZM460 246.1V244.0h1V246.1ZM464 199.7V190.1h1V199.7ZM466 244.0V223.5h1V244.0ZM468 244.2V241.9h1V244.2ZM471 243.7V242.6h1V243.7ZM473 243.7V238.2h1V243.7ZM475 246.1V245.2h1V246.1ZM478 245.9V242.6h1V245.9ZM480 245.7V243.8h1V245.7ZM482 245.7V242.5h1V245.7ZM484 245.7V245.0h1V245.7ZM486 244.7V211.7h1V244.7ZM488 241.9V233.5h1V241.9ZM490 241.9V240.2h1V241.9ZM494 241.1V237.6h1V241.1ZM496 237.1V229.0h1V237.1ZM500 243.9V238.6h1V243.9ZM502 244.7V242.9h1V244.7ZM508 244.6V243.7h1V244.6ZM510 244.6V243.2h1V244.6ZM512 245.0V239.8h1V245.0ZM523 245.2V243.1h1V245.2ZM526 244.9V241.3h1V244.9ZM529 245.6V244.1h1V245.6ZM531 244.5V242.9h1V244.5ZM538 242.6V241.8h1V242.6ZM544 241.5V234.8h1V241.5ZM547 243.7V236.5h1V243.7ZM549 245.5V243.9h1V245.5ZM552 243.5V237.0h1V243.5ZM555 239.7V236.8h1V239.7ZM558 243.8V236.1h1V243.8ZM560 245.1V241.1h1V245.1ZM562 245.1V241.5h1V245.1ZM565 243.1V241.9h1V243.1ZM567 244.4V241.7h1V244.4ZM573 242.9V237.1h1V242.9Z" fill="#62c878" shape-rendering="crispEdges"/>
<path d="M190.6 171.8L196.0 169.2L202.0 166.2L209.6 162.8L211.6 168.2L213.4 161.5L215.2 160.2L216.4 170.0L217.0 180.3L217.8 172.0L218.9 160.0L219.6 160.0L220.0 164.0L220.5 161.0L221.3 206.3L222.0 185.0L223.1 159.5L231.9 159.5L233.1 165.7L233.7 165.7L234.9 159.5L252.8 159.5L254.0 165.7L254.6 165.7L255.8 159.5L274.3 159.5L275.5 165.5L276.1 165.5L277.3 159.5L297.1 159.5L298.3 165.5L298.9 165.5L300.1 159.5L317.5 159.5L318.7 165.5L319.3 165.5L320.5 159.5L331.2 159.5L332.1 200.4L332.7 200.4L333.6 159.5L339.5 159.5L340.7 165.7L341.3 165.7L342.5 159.5L356.0 159.5L356.9 234.0L357.5 234.0L358.4 159.5L378.5 159.5L379.7 172.0L380.3 172.0L381.5 159.5L400.1 159.5L401.3 166.0L401.9 166.0L403.1 159.5L422.0 159.5L423.2 166.0L423.8 166.0L425.0 159.5L443.1 159.5L444.3 166.0L444.9 166.0L446.1 159.5L464.6 159.5L465.8 165.2L466.4 165.2L467.6 159.5L486.7 159.5L487.9 165.2L488.5 165.2L489.7 159.5L508.0 159.5L509.2 165.2L509.8 165.2L511.0 159.5L529.6 159.5L530.8 170.2L531.4 170.2L532.6 159.5L539.8 159.5L540.7 184.3L541.3 184.3L542.2 159.5L550.7 159.5L551.9 170.7L552.5 170.7L553.7 159.5L573.4 159.5L574.3 179.3L574.9 179.3L575.8 159.5L576.6 159.5L577.2 165.0" fill="none" stroke="#a0a0bc" stroke-width="1.15" stroke-linejoin="round"/>
<path d="M190.0 221.5H579.0" stroke="#70c8fc" stroke-width="1.4"/>
<path d="M189.0 127.9H624.0" stroke="#000" stroke-width="1.6"/>
<path d="M189.6 127.2V254.6" stroke="#000" stroke-width="1.5"/>
<path d="M623.5 127.2V253.6" stroke="#000" stroke-width="1"/>
<text x="186" y="232.0" text-anchor="end">100</text>
<path d="M186 229.5H189" stroke="#000"/>
<text x="186" y="206.9" text-anchor="end">200</text>
<path d="M186 203.5H189" stroke="#000"/>
<text x="186" y="181.9" text-anchor="end">300</text>
<path d="M186 178.5H189" stroke="#000"/>
<text x="186" y="156.8" text-anchor="end">400</text>
<path d="M186 153.5H189" stroke="#000"/>
<text x="186" y="131.7" text-anchor="end">500</text>
<path d="M186 128.5H189" stroke="#000"/>
<text x="627" y="241.4">1 X</text>
<path d="M623 238.5H626" stroke="#000"/>
<text x="627" y="225.8">2 X</text>
<path d="M623 222.5H626" stroke="#000"/>
<text x="627" y="210.1">3 X</text>
<path d="M623 207.5H626" stroke="#000"/>
<text x="627" y="194.4">4 X</text>
<path d="M623 191.5H626" stroke="#000"/>
<text x="627" y="178.7">5 X</text>
<path d="M623 175.5H626" stroke="#000"/>
<text x="627" y="163.0">6 X</text>
<path d="M623 160.5H626" stroke="#000"/>
<text x="627" y="147.4">7 X</text>
<path d="M623 144.5H626" stroke="#000"/>
<text x="627" y="131.7">8 X</text>
<path d="M623 128.5H626" stroke="#000"/>
<text x="189.8" y="263.6" text-anchor="middle">0.0</text>
<text x="233.0" y="263.6" text-anchor="middle">2.5</text>
<text x="276.2" y="263.6" text-anchor="middle">5.0</text>
<text x="319.5" y="263.6" text-anchor="middle">7.5</text>
<text x="362.7" y="263.6" text-anchor="middle">10.0</text>
<text x="405.9" y="263.6" text-anchor="middle">12.5</text>
<text x="449.1" y="263.6" text-anchor="middle">15.0</text>
<text x="492.4" y="263.6" text-anchor="middle">17.5</text>
<text x="535.6" y="263.6" text-anchor="middle">20.0</text>
<text x="578.8" y="263.6" text-anchor="middle">22.5</text>
<text x="602.3" y="263.6">25.0 GB</text>
<rect x="191.0" y="117.0" width="6" height="8" fill="#16801a"/>
<text x="200.5" y="124.8" letter-spacing="0">LDC</text>
<rect x="222.5" y="117.0" width="6" height="8" fill="#30e0f0"/>
<text x="232.0" y="124.8">Read speed</text>
<rect x="292.5" y="117.0" width="6" height="8" fill="#8c8c8c"/>
<text x="302.0" y="124.8">Write speed</text>
<rect x="365.5" y="117.0" width="6" height="8" fill="#8c8c8c"/>
<text x="375.0" y="124.8">Burned with PIONEER BD-RW&#160;&#160; BDR-S08 1.51 at 6X</text>
<rect x="190.0" y="284.4" width="433.0" height="125.6" fill="url(#bg)"/>
<path d="M198.5 284.4V410.0M207.5 284.4V410.0M215.5 284.4V410.0M224.5 284.4V410.0M233.5 284.4V410.0M241.5 284.4V410.0M250.5 284.4V410.0M259.5 284.4V410.0M267.5 284.4V410.0M276.5 284.4V410.0M285.5 284.4V410.0M293.5 284.4V410.0M302.5 284.4V410.0M311.5 284.4V410.0M319.5 284.4V410.0M328.5 284.4V410.0M336.5 284.4V410.0M345.5 284.4V410.0M354.5 284.4V410.0M362.5 284.4V410.0M371.5 284.4V410.0M380.5 284.4V410.0M388.5 284.4V410.0M397.5 284.4V410.0M406.5 284.4V410.0M414.5 284.4V410.0M423.5 284.4V410.0M432.5 284.4V410.0M440.5 284.4V410.0M449.5 284.4V410.0M457.5 284.4V410.0M466.5 284.4V410.0M475.5 284.4V410.0M483.5 284.4V410.0M492.5 284.4V410.0M501.5 284.4V410.0M509.5 284.4V410.0M518.5 284.4V410.0M527.5 284.4V410.0M535.5 284.4V410.0M544.5 284.4V410.0M553.5 284.4V410.0M561.5 284.4V410.0M570.5 284.4V410.0M579.5 284.4V410.0M587.5 284.4V410.0M596.5 284.4V410.0M604.5 284.4V410.0M613.5 284.4V410.0M190.0 297.5H623.0M190.0 310.5H623.0M190.0 322.5H623.0M190.0 335.5H623.0M190.0 347.5H623.0M190.0 360.5H623.0M190.0 372.5H623.0M190.0 385.5H623.0M190.0 397.5H623.0" stroke="#9a8e66" stroke-width="1" fill="none" opacity=".2"/>
<path d="M579.4 284.4V410.0" stroke="#8c2c68" stroke-width="1.2"/>
<path d="M190 410.0V372.3h1V410.0ZM191 410.0V372.3h1V410.0ZM192 410.0V372.3h1V410.0ZM193 410.0V384.9h1V410.0ZM194 410.0V384.9h1V410.0ZM195 410.0V384.9h1V410.0ZM196 410.0V384.9h1V410.0ZM197 410.0V372.3h1V410.0ZM198 410.0V372.3h1V410.0ZM199 410.0V372.3h1V410.0ZM200 410.0V372.3h1V410.0ZM201 410.0V384.9h1V410.0ZM202 410.0V384.9h1V410.0ZM203 410.0V384.9h1V410.0ZM204 410.0V372.3h1V410.0ZM205 410.0V372.3h1V410.0ZM206 410.0V384.9h1V410.0ZM207 410.0V372.3h1V410.0ZM208 410.0V384.9h1V410.0ZM209 410.0V384.9h1V410.0ZM210 410.0V384.9h1V410.0ZM211 410.0V372.3h1V410.0ZM212 410.0V372.3h1V410.0ZM213 410.0V384.9h1V410.0ZM214 410.0V384.9h1V410.0ZM215 410.0V384.9h1V410.0ZM216 410.0V372.3h1V410.0ZM217 410.0V372.3h1V410.0ZM218 410.0V384.9h1V410.0ZM219 410.0V384.9h1V410.0ZM220 410.0V384.9h1V410.0ZM221 410.0V372.3h1V410.0ZM222 410.0V372.3h1V410.0ZM223 410.0V372.3h1V410.0ZM224 410.0V372.3h1V410.0ZM225 410.0V372.3h1V410.0ZM226 410.0V384.9h1V410.0ZM227 410.0V384.9h1V410.0ZM228 410.0V384.9h1V410.0ZM229 410.0V372.3h1V410.0ZM230 410.0V384.9h1V410.0ZM231 410.0V372.3h1V410.0ZM232 410.0V384.9h1V410.0ZM233 410.0V384.9h1V410.0ZM234 410.0V384.9h1V410.0ZM235 410.0V372.3h1V410.0ZM236 410.0V384.9h1V410.0ZM237 410.0V384.9h1V410.0ZM238 410.0V384.9h1V410.0ZM239 410.0V384.9h1V410.0ZM240 410.0V372.3h1V410.0ZM241 410.0V372.3h1V410.0ZM242 410.0V384.9h1V410.0ZM243 410.0V372.3h1V410.0ZM244 410.0V384.9h1V410.0ZM245 410.0V384.9h1V410.0ZM246 410.0V384.9h1V410.0ZM247 410.0V359.8h1V410.0ZM248 410.0V359.8h1V410.0ZM249 410.0V372.3h1V410.0ZM250 410.0V384.9h1V410.0ZM251 410.0V372.3h1V410.0ZM252 410.0V384.9h1V410.0ZM253 410.0V372.3h1V410.0ZM254 410.0V384.9h1V410.0ZM255 410.0V372.3h1V410.0ZM256 410.0V372.3h1V410.0ZM257 410.0V372.3h1V410.0ZM258 410.0V372.3h1V410.0ZM259 410.0V372.3h1V410.0ZM260 410.0V384.9h1V410.0ZM261 410.0V384.9h1V410.0ZM262 410.0V384.9h1V410.0ZM263 410.0V384.9h1V410.0ZM264 410.0V384.9h1V410.0ZM265 410.0V372.3h1V410.0ZM266 410.0V372.3h1V410.0ZM267 410.0V372.3h1V410.0ZM268 410.0V372.3h1V410.0ZM269 410.0V384.9h1V410.0ZM270 410.0V384.9h1V410.0ZM271 410.0V384.9h1V410.0ZM272 410.0V372.3h1V410.0ZM273 410.0V372.3h1V410.0ZM274 410.0V372.3h1V410.0ZM275 410.0V372.3h1V410.0ZM276 410.0V384.9h1V410.0ZM277 410.0V372.3h1V410.0ZM278 410.0V372.3h1V410.0ZM279 410.0V372.3h1V410.0ZM280 410.0V372.3h1V410.0ZM281 410.0V372.3h1V410.0ZM282 410.0V384.9h1V410.0ZM283 410.0V384.9h1V410.0ZM284 410.0V372.3h1V410.0ZM285 410.0V372.3h1V410.0ZM286 410.0V372.3h1V410.0ZM287 410.0V372.3h1V410.0ZM288 410.0V372.3h1V410.0ZM289 410.0V372.3h1V410.0ZM290 410.0V372.3h1V410.0ZM291 410.0V372.3h1V410.0ZM292 410.0V372.3h1V410.0ZM293 410.0V372.3h1V410.0ZM294 410.0V372.3h1V410.0ZM295 410.0V384.9h1V410.0ZM296 410.0V372.3h1V410.0ZM297 410.0V372.3h1V410.0ZM298 410.0V372.3h1V410.0ZM299 410.0V384.9h1V410.0ZM300 410.0V384.9h1V410.0ZM301 410.0V384.9h1V410.0ZM302 410.0V384.9h1V410.0ZM303 410.0V384.9h1V410.0ZM304 410.0V384.9h1V410.0ZM305 410.0V384.9h1V410.0ZM306 410.0V372.3h1V410.0ZM307 410.0V372.3h1V410.0ZM308 410.0V372.3h1V410.0ZM309 410.0V384.9h1V410.0ZM310 410.0V384.9h1V410.0ZM311 410.0V372.3h1V410.0ZM312 410.0V372.3h1V410.0ZM313 410.0V372.3h1V410.0ZM314 410.0V372.3h1V410.0ZM315 410.0V372.3h1V410.0ZM316 410.0V372.3h1V410.0ZM317 410.0V372.3h1V410.0ZM318 410.0V372.3h1V410.0ZM319 410.0V372.3h1V410.0ZM320 410.0V372.3h1V410.0ZM321 410.0V372.3h1V410.0ZM322 410.0V384.9h1V410.0ZM323 410.0V384.9h1V410.0ZM324 410.0V372.3h1V410.0ZM325 410.0V372.3h1V410.0ZM326 410.0V384.9h1V410.0ZM327 410.0V372.3h1V410.0ZM328 410.0V384.9h1V410.0ZM329 410.0V372.3h1V410.0ZM330 410.0V372.3h1V410.0ZM331 410.0V372.3h1V410.0ZM332 410.0V384.9h1V410.0ZM333 410.0V384.9h1V410.0ZM334 410.0V384.9h1V410.0ZM335 410.0V372.3h1V410.0ZM336 410.0V384.9h1V410.0ZM337 410.0V372.3h1V410.0ZM338 410.0V372.3h1V410.0ZM339 410.0V372.3h1V410.0ZM340 410.0V372.3h1V410.0ZM341 410.0V372.3h1V410.0ZM342 410.0V372.3h1V410.0ZM343 410.0V384.9h1V410.0ZM344 410.0V372.3h1V410.0ZM345 410.0V372.3h1V410.0ZM346 410.0V384.9h1V410.0ZM347 410.0V372.3h1V410.0ZM348 410.0V372.3h1V410.0ZM349 410.0V372.3h1V410.0ZM350 410.0V372.3h1V410.0ZM351 410.0V372.3h1V410.0ZM352 410.0V372.3h1V410.0ZM353 410.0V372.3h1V410.0ZM354 410.0V384.9h1V410.0ZM355 410.0V384.9h1V410.0ZM356 410.0V384.9h1V410.0ZM357 410.0V384.9h1V410.0ZM358 410.0V372.3h1V410.0ZM359 410.0V384.9h1V410.0ZM360 410.0V372.3h1V410.0ZM361 410.0V384.9h1V410.0ZM362 410.0V384.9h1V410.0ZM363 410.0V372.3h1V410.0ZM364 410.0V384.9h1V410.0ZM365 410.0V372.3h1V410.0ZM366 410.0V372.3h1V410.0ZM367 410.0V372.3h1V410.0ZM368 410.0V384.9h1V410.0ZM369 410.0V384.9h1V410.0ZM370 410.0V384.9h1V410.0ZM371 410.0V372.3h1V410.0ZM372 410.0V372.3h1V410.0ZM373 410.0V372.3h1V410.0ZM374 410.0V384.9h1V410.0ZM375 410.0V372.3h1V410.0ZM376 410.0V372.3h1V410.0ZM377 410.0V384.9h1V410.0ZM378 410.0V384.9h1V410.0ZM379 410.0V372.3h1V410.0ZM380 410.0V372.3h1V410.0ZM381 410.0V359.8h1V410.0ZM382 410.0V359.8h1V410.0ZM383 410.0V359.8h1V410.0ZM384 410.0V384.9h1V410.0ZM385 410.0V372.3h1V410.0ZM386 410.0V359.8h1V410.0ZM387 410.0V359.8h1V410.0ZM388 410.0V372.3h1V410.0ZM389 410.0V372.3h1V410.0ZM390 410.0V372.3h1V410.0ZM391 410.0V359.8h1V410.0ZM392 410.0V334.6h1V410.0ZM393 410.0V334.6h1V410.0ZM394 410.0V372.3h1V410.0ZM395 410.0V372.3h1V410.0ZM396 410.0V372.3h1V410.0ZM397 410.0V372.3h1V410.0ZM398 410.0V372.3h1V410.0ZM399 410.0V372.3h1V410.0ZM400 410.0V372.3h1V410.0ZM401 410.0V372.3h1V410.0ZM402 410.0V372.3h1V410.0ZM403 410.0V372.3h1V410.0ZM404 410.0V372.3h1V410.0ZM405 410.0V384.9h1V410.0ZM406 410.0V372.3h1V410.0ZM407 410.0V372.3h1V410.0ZM408 410.0V372.3h1V410.0ZM409 410.0V372.3h1V410.0ZM410 410.0V372.3h1V410.0ZM411 410.0V384.9h1V410.0ZM412 410.0V359.8h1V410.0ZM413 410.0V359.8h1V410.0ZM414 410.0V372.3h1V410.0ZM415 410.0V372.3h1V410.0ZM416 410.0V372.3h1V410.0ZM417 410.0V372.3h1V410.0ZM418 410.0V372.3h1V410.0ZM419 410.0V372.3h1V410.0ZM420 410.0V359.8h1V410.0ZM421 410.0V359.8h1V410.0ZM422 410.0V372.3h1V410.0ZM423 410.0V372.3h1V410.0ZM424 410.0V372.3h1V410.0ZM425 410.0V359.8h1V410.0ZM426 410.0V359.8h1V410.0ZM427 410.0V372.3h1V410.0ZM428 410.0V372.3h1V410.0ZM429 410.0V372.3h1V410.0ZM430 410.0V372.3h1V410.0ZM431 410.0V372.3h1V410.0ZM432 410.0V372.3h1V410.0ZM433 410.0V372.3h1V410.0ZM434 410.0V372.3h1V410.0ZM435 410.0V372.3h1V410.0ZM436 410.0V372.3h1V410.0ZM437 410.0V359.8h1V410.0ZM438 410.0V359.8h1V410.0ZM439 410.0V372.3h1V410.0ZM440 410.0V372.3h1V410.0ZM441 410.0V359.8h1V410.0ZM442 410.0V359.8h1V410.0ZM443 410.0V372.3h1V410.0ZM444 410.0V372.3h1V410.0ZM445 410.0V372.3h1V410.0ZM446 410.0V384.9h1V410.0ZM447 410.0V359.8h1V410.0ZM448 410.0V359.8h1V410.0ZM449 410.0V359.8h1V410.0ZM450 410.0V359.8h1V410.0ZM451 410.0V372.3h1V410.0ZM452 410.0V372.3h1V410.0ZM453 410.0V372.3h1V410.0ZM454 410.0V372.3h1V410.0ZM455 410.0V372.3h1V410.0ZM456 410.0V372.3h1V410.0ZM457 410.0V372.3h1V410.0ZM458 410.0V372.3h1V410.0ZM459 410.0V372.3h1V410.0ZM460 410.0V372.3h1V410.0ZM461 410.0V372.3h1V410.0ZM462 410.0V359.8h1V410.0ZM463 410.0V347.2h1V410.0ZM464 410.0V347.2h1V410.0ZM465 410.0V347.2h1V410.0ZM466 410.0V384.9h1V410.0ZM467 410.0V372.3h1V410.0ZM468 410.0V372.3h1V410.0ZM469 410.0V372.3h1V410.0ZM470 410.0V372.3h1V410.0ZM471 410.0V372.3h1V410.0ZM472 410.0V359.8h1V410.0ZM473 410.0V359.8h1V410.0ZM474 410.0V372.3h1V410.0ZM475 410.0V372.3h1V410.0ZM476 410.0V372.3h1V410.0ZM477 410.0V372.3h1V410.0ZM478 410.0V372.3h1V410.0ZM479 410.0V372.3h1V410.0ZM480 410.0V372.3h1V410.0ZM481 410.0V384.9h1V410.0ZM482 410.0V372.3h1V410.0ZM483 410.0V372.3h1V410.0ZM484 410.0V372.3h1V410.0ZM485 410.0V372.3h1V410.0ZM486 410.0V372.3h1V410.0ZM487 410.0V359.8h1V410.0ZM488 410.0V359.8h1V410.0ZM489 410.0V372.3h1V410.0ZM490 410.0V372.3h1V410.0ZM491 410.0V372.3h1V410.0ZM492 410.0V372.3h1V410.0ZM493 410.0V372.3h1V410.0ZM494 410.0V372.3h1V410.0ZM495 410.0V372.3h1V410.0ZM496 410.0V372.3h1V410.0ZM497 410.0V372.3h1V410.0ZM498 410.0V372.3h1V410.0ZM499 410.0V372.3h1V410.0ZM500 410.0V359.8h1V410.0ZM501 410.0V359.8h1V410.0ZM502 410.0V359.8h1V410.0ZM503 410.0V372.3h1V410.0ZM504 410.0V372.3h1V410.0ZM505 410.0V372.3h1V410.0ZM506 410.0V372.3h1V410.0ZM507 410.0V372.3h1V410.0ZM508 410.0V384.9h1V410.0ZM509 410.0V372.3h1V410.0ZM510 410.0V372.3h1V410.0ZM511 410.0V372.3h1V410.0ZM512 410.0V372.3h1V410.0ZM513 410.0V372.3h1V410.0ZM514 410.0V372.3h1V410.0ZM515 410.0V372.3h1V410.0ZM516 410.0V372.3h1V410.0ZM517 410.0V372.3h1V410.0ZM518 410.0V372.3h1V410.0ZM519 410.0V372.3h1V410.0ZM520 410.0V372.3h1V410.0ZM521 410.0V384.9h1V410.0ZM522 410.0V372.3h1V410.0ZM523 410.0V372.3h1V410.0ZM524 410.0V372.3h1V410.0ZM525 410.0V372.3h1V410.0ZM526 410.0V372.3h1V410.0ZM527 410.0V372.3h1V410.0ZM528 410.0V372.3h1V410.0ZM529 410.0V372.3h1V410.0ZM530 410.0V372.3h1V410.0ZM531 410.0V372.3h1V410.0ZM532 410.0V372.3h1V410.0ZM533 410.0V384.9h1V410.0ZM534 410.0V372.3h1V410.0ZM535 410.0V372.3h1V410.0ZM536 410.0V372.3h1V410.0ZM537 410.0V372.3h1V410.0ZM538 410.0V384.9h1V410.0ZM539 410.0V372.3h1V410.0ZM540 410.0V372.3h1V410.0ZM541 410.0V372.3h1V410.0ZM542 410.0V372.3h1V410.0ZM543 410.0V372.3h1V410.0ZM544 410.0V372.3h1V410.0ZM545 410.0V372.3h1V410.0ZM546 410.0V372.3h1V410.0ZM547 410.0V372.3h1V410.0ZM548 410.0V372.3h1V410.0ZM549 410.0V372.3h1V410.0ZM550 410.0V372.3h1V410.0ZM551 410.0V372.3h1V410.0ZM552 410.0V372.3h1V410.0ZM553 410.0V372.3h1V410.0ZM554 410.0V372.3h1V410.0ZM555 410.0V372.3h1V410.0ZM556 410.0V372.3h1V410.0ZM557 410.0V372.3h1V410.0ZM558 410.0V372.3h1V410.0ZM559 410.0V372.3h1V410.0ZM560 410.0V372.3h1V410.0ZM561 410.0V372.3h1V410.0ZM562 410.0V372.3h1V410.0ZM563 410.0V372.3h1V410.0ZM564 410.0V372.3h1V410.0ZM565 410.0V372.3h1V410.0ZM566 410.0V372.3h1V410.0ZM567 410.0V359.8h1V410.0ZM568 410.0V359.8h1V410.0ZM569 410.0V359.8h1V410.0ZM570 410.0V372.3h1V410.0ZM571 410.0V372.3h1V410.0ZM572 410.0V372.3h1V410.0ZM573 410.0V372.3h1V410.0ZM574 410.0V372.3h1V410.0ZM575 410.0V372.3h1V410.0ZM576 410.0V384.9h1V410.0ZM577 410.0V359.8h1V410.0ZM578 410.0V359.8h1V410.0ZM579 410.0V372.3h1V410.0Z" fill="#22c60e" shape-rendering="crispEdges"/>
<path d="M190 372.3V359.8h1V372.3ZM200 372.3V359.8h1V372.3ZM217 372.3V359.8h1V372.3ZM221 372.3V359.8h1V372.3ZM225 372.3V359.8h1V372.3ZM240 372.3V347.2h1V372.3ZM255 372.3V359.8h1V372.3ZM266 372.3V359.8h1V372.3ZM272 372.3V359.8h1V372.3ZM281 372.3V359.8h1V372.3ZM284 372.3V359.8h1V372.3ZM288 372.3V359.8h1V372.3ZM312 372.3V359.8h1V372.3ZM315 372.3V359.8h1V372.3ZM318 372.3V359.8h1V372.3ZM325 372.3V359.8h1V372.3ZM330 372.3V359.8h1V372.3ZM338 372.3V359.8h1V372.3ZM344 372.3V359.8h1V372.3ZM375 372.3V359.8h1V372.3ZM383 359.8V347.2h1V359.8ZM392 334.6V297.0h1V334.6ZM395 372.3V359.8h1V372.3ZM399 372.3V359.8h1V372.3ZM402 372.3V359.8h1V372.3ZM413 359.8V347.2h1V359.8ZM423 372.3V359.8h1V372.3ZM426 359.8V347.2h1V359.8ZM429 372.3V359.8h1V372.3ZM432 372.3V359.8h1V372.3ZM441 359.8V347.2h1V359.8ZM445 372.3V359.8h1V372.3ZM457 372.3V359.8h1V372.3ZM464 347.2V334.6h1V347.2ZM468 372.3V347.2h1V372.3ZM478 372.3V359.8h1V372.3ZM483 372.3V359.8h1V372.3ZM485 372.3V359.8h1V372.3ZM488 359.8V347.2h1V359.8ZM496 372.3V359.8h1V372.3ZM502 359.8V334.6h1V359.8ZM504 372.3V359.8h1V372.3ZM506 372.3V359.8h1V372.3ZM511 372.3V359.8h1V372.3ZM515 372.3V347.2h1V372.3ZM517 372.3V359.8h1V372.3ZM519 372.3V359.8h1V372.3ZM523 372.3V359.8h1V372.3ZM525 372.3V359.8h1V372.3ZM527 372.3V359.8h1V372.3ZM529 372.3V359.8h1V372.3ZM535 372.3V359.8h1V372.3ZM544 372.3V359.8h1V372.3ZM549 372.3V359.8h1V372.3ZM551 372.3V359.8h1V372.3ZM554 372.3V347.2h1V372.3ZM557 372.3V359.8h1V372.3ZM560 372.3V359.8h1V372.3ZM563 372.3V359.8h1V372.3ZM571 372.3V359.8h1V372.3ZM573 372.3V359.8h1V372.3Z" fill="#86d05c" shape-rendering="crispEdges"/>
<path d="M190.5 336.8L191.5 337.7L192.5 336.7L193.5 336.6L194.5 338.3L195.5 337.7L196.5 337.9L197.5 336.8L198.5 336.7L199.5 338.9L200.5 341.3L201.5 343.8L202.5 344.3L203.5 344.9L204.5 345.7L205.5 344.6L206.5 346.5L207.5 346.3L208.5 346.5L209.5 346.3L210.5 345.4L211.5 346.8L212.5 345.0L213.5 344.8L214.5 345.8L215.5 346.0L216.5 346.9L217.5 346.5L218.5 345.8L219.5 347.1L220.5 345.1L221.5 346.9L222.5 345.8L223.5 346.5L224.5 347.6L225.5 345.9L226.5 344.0L227.5 343.1L228.5 346.9L229.5 345.7L230.5 345.8L231.5 345.5L232.5 347.1L233.5 347.3L234.5 346.4L235.5 346.0L236.5 348.3L237.5 347.9L238.5 347.9L239.5 347.9L240.5 347.5L241.5 345.2L242.5 346.1L243.5 348.7L244.5 347.2L245.5 347.2L246.5 344.6L247.5 348.7L248.5 349.0L249.5 349.0L250.5 348.2L251.5 349.1L252.5 346.9L253.5 349.1L254.5 346.9L255.5 348.1L256.5 347.1L257.5 348.9L258.5 347.7L259.5 348.5L260.5 349.2L261.5 348.4L262.5 347.5L263.5 348.7L264.5 349.9L265.5 349.5L266.5 347.5L267.5 347.7L268.5 347.7L269.5 349.4L270.5 348.0L271.5 348.0L272.5 349.0L273.5 349.6L274.5 349.2L275.5 349.7L276.5 349.3L277.5 348.9L278.5 349.6L279.5 350.3L280.5 349.1L281.5 348.5L282.5 348.5L283.5 348.1L284.5 349.1L285.5 348.9L286.5 350.4L287.5 349.3L288.5 349.7L289.5 350.3L290.5 350.0L291.5 350.4L292.5 348.9L293.5 349.8L294.5 349.3L295.5 346.8L296.5 348.7L297.5 349.7L298.5 349.3L299.5 349.6L300.5 350.1L301.5 349.8L302.5 349.1L303.5 349.9L304.5 348.4L305.5 350.6L306.5 348.4L307.5 349.3L308.5 349.1L309.5 348.5L310.5 349.6L311.5 350.6L312.5 347.3L313.5 350.5L314.5 349.5L315.5 348.8L316.5 350.1L317.5 349.3L318.5 348.4L319.5 348.8L320.5 348.3L321.5 349.3L322.5 350.0L323.5 349.7L324.5 349.3L325.5 347.6L326.5 347.4L327.5 348.6L328.5 349.3L329.5 348.8L330.5 348.3L331.5 348.2L332.5 347.8L333.5 347.4L334.5 347.7L335.5 347.1L336.5 347.0L337.5 349.4L338.5 347.4L339.5 347.1L340.5 347.9L341.5 348.7L342.5 348.8L343.5 345.6L344.5 348.9L345.5 347.8L346.5 347.9L347.5 347.2L348.5 347.4L349.5 348.2L350.5 348.7L351.5 346.5L352.5 348.5L353.5 344.8L354.5 348.0L355.5 344.4L356.5 348.4L357.5 347.9L358.5 346.9L359.5 348.4L360.5 347.1L361.5 347.6L362.5 345.6L363.5 346.4L364.5 346.6L365.5 347.0L366.5 348.0L367.5 347.7L368.5 344.7L369.5 345.5L370.5 346.9L371.5 345.5L372.5 346.0L373.5 346.6L374.5 346.2L375.5 346.3L376.5 346.4L377.5 347.4L378.5 346.8L379.5 346.9L380.5 345.3L381.5 346.1L382.5 346.6L383.5 346.6L384.5 345.5L385.5 346.3L386.5 346.5L387.5 345.2L388.5 344.3L389.5 345.7L390.5 345.4L391.5 345.4L392.5 344.8L393.5 346.5L394.5 344.7L395.5 346.5L396.5 344.0L397.5 344.6L398.5 344.4L399.5 345.9L400.5 346.2L401.5 344.2L402.5 345.7L403.5 346.0L404.5 344.0L405.5 345.2L406.5 344.8L407.5 344.3L408.5 343.5L409.5 344.9L410.5 344.0L411.5 345.7L412.5 344.5L413.5 344.7L414.5 345.4L415.5 344.9L416.5 345.0L417.5 344.4L418.5 344.3L419.5 345.0L420.5 343.9L421.5 342.8L422.5 344.7L423.5 343.8L424.5 343.4L425.5 342.7L426.5 343.1L427.5 342.6L428.5 343.4L429.5 342.4L430.5 344.8L431.5 342.8L432.5 342.4L433.5 342.8L434.5 343.2L435.5 343.5L436.5 342.4L437.5 344.1L438.5 343.2L439.5 343.4L440.5 343.3L441.5 343.4L442.5 343.1L443.5 344.7L444.5 343.1L445.5 344.9L446.5 343.3L447.5 344.7L448.5 345.0L449.5 345.3L450.5 345.2L451.5 344.3L452.5 341.6L453.5 343.9L454.5 344.1L455.5 345.5L456.5 344.3L457.5 344.2L458.5 344.8L459.5 344.2L460.5 343.5L461.5 345.0L462.5 342.1L463.5 342.7L464.5 343.9L465.5 346.0L466.5 343.8L467.5 345.2L468.5 345.7L469.5 346.3L470.5 343.9L471.5 344.6L472.5 344.7L473.5 345.0L474.5 345.4L475.5 345.9L476.5 346.6L477.5 345.2L478.5 345.0L479.5 346.7L480.5 346.9L481.5 346.6L482.5 344.5L483.5 344.8L484.5 346.9L485.5 346.4L486.5 346.3L487.5 346.4L488.5 347.0L489.5 345.2L490.5 347.3L491.5 345.4L492.5 344.9L493.5 347.5L494.5 346.5L495.5 345.1L496.5 346.1L497.5 347.2L498.5 346.1L499.5 345.3L500.5 346.7L501.5 344.8L502.5 346.4L503.5 346.7L504.5 345.7L505.5 346.3L506.5 345.8L507.5 345.7L508.5 346.4L509.5 348.3L510.5 346.6L511.5 347.2L512.5 347.1L513.5 347.1L514.5 348.2L515.5 347.0L516.5 346.5L517.5 347.8L518.5 347.3L519.5 347.8L520.5 348.5L521.5 347.5L522.5 346.7L523.5 347.0L524.5 348.7L525.5 347.6L526.5 348.2L527.5 348.0L528.5 348.6L529.5 348.7L530.5 348.7L531.5 347.7L532.5 347.7L533.5 348.9L534.5 348.1L535.5 347.6L536.5 348.1L537.5 347.9L538.5 349.3L539.5 348.4L540.5 347.3L541.5 347.3L542.5 348.7L543.5 348.5L544.5 349.5L545.5 349.8L546.5 348.4L547.5 347.8L548.5 348.3L549.5 349.0L550.5 349.9L551.5 350.1L552.5 349.8L553.5 348.5L554.5 349.5L555.5 348.4L556.5 350.5L557.5 350.0L558.5 349.3L559.5 349.4L560.5 349.8L561.5 349.9L562.5 350.7L563.5 350.2L564.5 346.9L565.5 348.4L566.5 348.9L567.5 350.9L568.5 350.7L569.5 348.9L570.5 349.0L571.5 350.6L572.5 349.3L573.5 348.0L574.5 348.8L575.5 348.0L576.5 349.3" fill="none" stroke="#9090fa" stroke-width="1" stroke-linejoin="round"/>
<path d="M189.0 284.1H624.0" stroke="#000" stroke-width="1.6"/>
<path d="M189.6 283.4V411.0" stroke="#000" stroke-width="1.5"/>
<path d="M623.5 283.4V410.0" stroke="#000" stroke-width="1"/>
<text x="186" y="400.9" text-anchor="end">1</text>
<path d="M186 397.5H189" stroke="#000"/>
<text x="186" y="388.4" text-anchor="end">2</text>
<path d="M186 385.5H189" stroke="#000"/>
<text x="186" y="375.8" text-anchor="end">3</text>
<path d="M186 372.5H189" stroke="#000"/>
<text x="186" y="363.3" text-anchor="end">4</text>
<path d="M186 360.5H189" stroke="#000"/>
<text x="186" y="350.7" text-anchor="end">5</text>
<path d="M186 347.5H189" stroke="#000"/>
<text x="186" y="338.1" text-anchor="end">6</text>
<path d="M186 335.5H189" stroke="#000"/>
<text x="186" y="325.6" text-anchor="end">7</text>
<path d="M186 322.5H189" stroke="#000"/>
<text x="186" y="313.0" text-anchor="end">8</text>
<path d="M186 310.5H189" stroke="#000"/>
<text x="186" y="300.5" text-anchor="end">9</text>
<path d="M186 297.5H189" stroke="#000"/>
<text x="186" y="287.9" text-anchor="end">10</text>
<path d="M186 284.5H189" stroke="#000"/>
<text x="627" y="388.4">4%</text>
<text x="627" y="363.3">8%</text>
<text x="627" y="338.1">12%</text>
<text x="627" y="313.0">16%</text>
<text x="627" y="287.9">20%</text>
<text x="189.8" y="419.6" text-anchor="middle">0.0</text>
<text x="233.0" y="419.6" text-anchor="middle">2.5</text>
<text x="276.2" y="419.6" text-anchor="middle">5.0</text>
<text x="319.5" y="419.6" text-anchor="middle">7.5</text>
<text x="362.7" y="419.6" text-anchor="middle">10.0</text>
<text x="405.9" y="419.6" text-anchor="middle">12.5</text>
<text x="449.1" y="419.6" text-anchor="middle">15.0</text>
<text x="492.4" y="419.6" text-anchor="middle">17.5</text>
<text x="535.6" y="419.6" text-anchor="middle">20.0</text>
<text x="578.8" y="419.6" text-anchor="middle">22.5</text>
<text x="602.3" y="419.6">25.0 GB</text>
<rect x="191.0" y="273.0" width="6" height="8" fill="#16801a"/>
<text x="200.5" y="280.8" letter-spacing="0">BIS</text>
<rect x="219.0" y="273.0" width="6" height="8" fill="#9090f0"/>
<text x="228.5" y="280.8">Jitter</text>
<rect x="255" y="269" width="6" height="2" fill="#000"/>
</svg>
<span style="left:252.20px;top:430.00px;font-size:11.2px;letter-spacing:-0.450px;transform:scaleX(0.9163);transform-origin:0 0;color:#222;">LDC</span>
<span style="left:311.30px;top:430.00px;font-size:11.2px;letter-spacing:-0.450px;transform:scaleX(0.8347);transform-origin:0 0;color:#222;">BIS</span>
<span style="left:163.10px;top:446.00px;font-size:11.2px;letter-spacing:-0.450px;transform:scaleX(0.9837);transform-origin:0 0;color:#222;">Avg</span>
<span style="left:253.40px;top:446.00px;font-size:11.2px;letter-spacing:-0.450px;transform:scaleX(0.9054);transform-origin:0 0;color:#1c1c8c;">8.04</span>
<span style="left:306.60px;top:446.00px;font-size:11.2px;letter-spacing:-0.450px;transform:scaleX(0.9445);transform-origin:0 0;color:#1c1c8c;">0.16</span>
<span style="left:163.30px;top:462.00px;font-size:11.2px;letter-spacing:-0.434px;color:#222;">Max</span>
<span style="left:256.00px;top:462.00px;font-size:11.2px;letter-spacing:-0.450px;transform:scaleX(0.8931);transform-origin:0 0;color:#1c1c8c;">455</span>
<span style="left:319.94px;top:462.00px;font-size:11.2px;letter-spacing:0.000px;color:#1c1c8c;">9</span>
<span style="left:161.40px;top:478.00px;font-size:11.2px;letter-spacing:-0.258px;color:#222;">Total</span>
<span style="left:230.20px;top:478.00px;font-size:11.2px;letter-spacing:-0.321px;color:#1c1c8c;">2970473</span>
<span style="left:297.70px;top:478.00px;font-size:11.2px;letter-spacing:-0.450px;transform:scaleX(0.9613);transform-origin:0 0;color:#1c1c8c;">59139</span>
<div style="left:395px;top:430px;width:13px;height:13px;background:#fff;border:1px solid #333"></div>
<svg style="left:395px;top:430px" width="13" height="13"><path d="M3 6.5L5.5 9L10 3.5" fill="none" stroke="#000" stroke-width="1.1"/></svg>
<span style="left:417.40px;top:430.00px;font-size:11.2px;letter-spacing:-0.050px;color:#222;">Jitter</span>
<span style="left:419.70px;top:446.00px;font-size:11.2px;letter-spacing:-0.450px;transform:scaleX(0.9138);transform-origin:0 0;color:#1c1c8c;">9.8%</span>
<span style="left:414.00px;top:462.00px;font-size:11.2px;letter-spacing:-0.450px;transform:scaleX(0.9549);transform-origin:0 0;color:#1c1c8c;">11.6%</span>
<span style="left:461.40px;top:434.00px;font-size:11.2px;letter-spacing:-0.450px;transform:scaleX(0.9651);transform-origin:0 0;color:#222;">Speed</span>
<span style="left:520.50px;top:434.00px;font-size:11.2px;letter-spacing:-0.450px;transform:scaleX(0.9463);transform-origin:0 0;color:#1c1c8c;">2.01 X</span>
<span style="left:461.40px;top:462.00px;font-size:11.2px;letter-spacing:-0.196px;color:#222;">Position</span>
<span style="left:520.50px;top:462.00px;font-size:11.2px;letter-spacing:-0.382px;color:#1c1c8c;">23093 MB</span>
<span style="left:461.40px;top:478.00px;font-size:11.2px;letter-spacing:-0.450px;transform:scaleX(0.9690);transform-origin:0 0;color:#222;">Samples</span>
<span style="left:520.50px;top:478.00px;font-size:11.2px;letter-spacing:-0.450px;transform:scaleX(0.9971);transform-origin:0 0;color:#1c1c8c;">369469</span>
<div class="btn" style="left:575px;top:428.5px;width:74.6px;height:20px"></div>
<span style="left:579.30px;top:432.00px;font-size:11.2px;letter-spacing:-0.450px;transform:scaleX(0.9404);transform-origin:0 0;color:#111;">2.0 X</span>
<svg style="left:635px;top:435px" width="12" height="8"><path d="M1.9 2L6.1 6.2L10.3 2" fill="none" stroke="#3a3a3a" stroke-width="1"/></svg>
<div class="btn" style="left:576px;top:452.3px;width:72.8px;height:20.3px"></div>
<span style="left:591.50px;top:455.00px;font-size:11.2px;letter-spacing:-0.023px;color:#111;">Start full</span>
<div class="btn" style="left:575px;top:479.3px;width:72.7px;height:20.3px"></div>
<span style="left:588.00px;top:482.00px;font-size:11.2px;letter-spacing:0.090px;color:#111;">Start part</span>
</body></html>
